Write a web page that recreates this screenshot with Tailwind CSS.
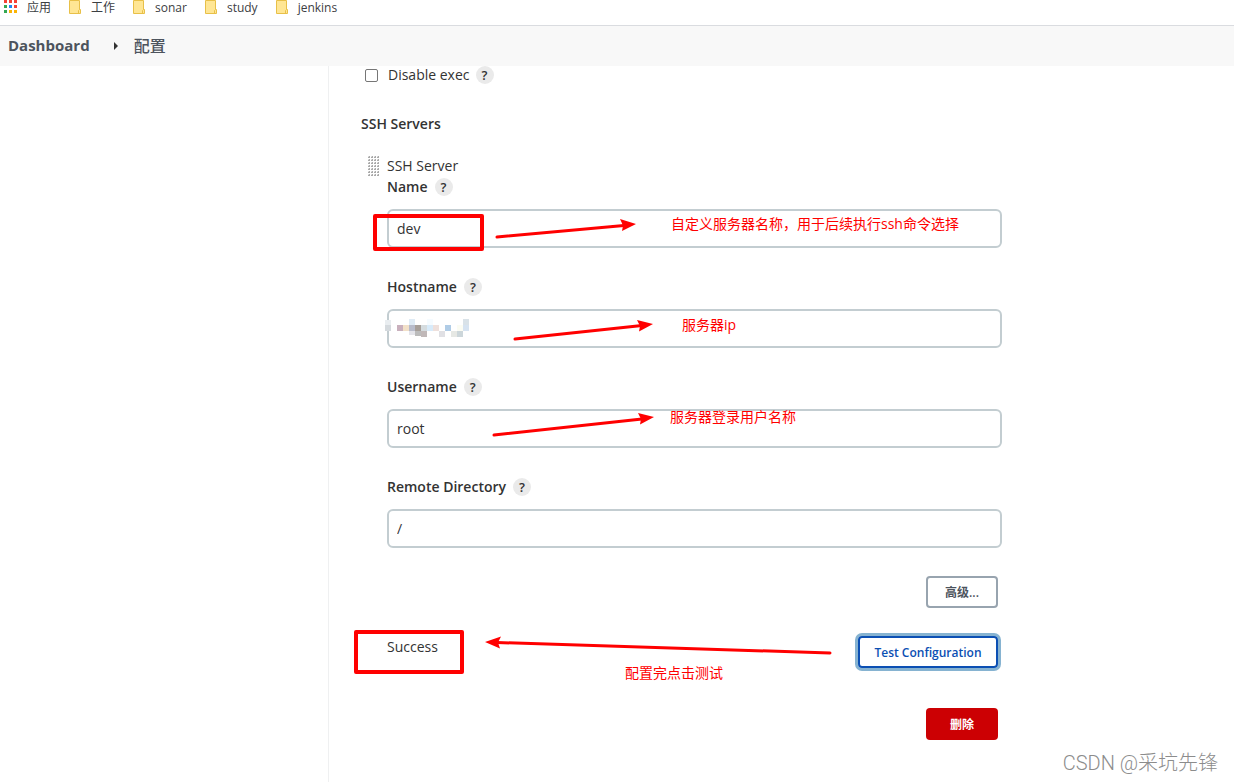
<!DOCTYPE html>
<html lang="zh-CN">
<head>
<meta charset="utf-8">
<meta name="viewport" content="width=device-width, initial-scale=1">
<title>配置 - Jenkins</title>
<script src="https://cdn.jsdelivr.net/npm/@tailwindcss/browser@4"></script>
</head>
<body class="relative flex min-h-screen flex-col overflow-x-hidden bg-white font-['Open_Sans','Noto_Sans_CJK_SC',sans-serif] text-sm text-[#333333]">

<!-- Bookmarks bar -->
<nav aria-label="书签" class="flex h-[26px] shrink-0 items-start gap-[18px] border-b border-[#dadce0] pl-1 text-xs leading-4 text-[#3c4043]">
  <a href="#" class="flex items-start gap-[10px]">
    <svg class="h-[14px] w-[13px]" viewBox="0 0 13 14" aria-hidden="true" shape-rendering="crispEdges">
      <path fill="#f44336" d="M0 0h3v3H0zM5 0h3v3H5zM10 0h3v3h-3z"/>
      <path fill="#34a853" d="M0 5h3v3H0zM0 10h3v3H0z"/>
      <path fill="#1e88f5" d="M5 5h3v3H5z"/>
      <path fill="#f44336" d="M10 5h3v3h-3z"/>
      <path fill="#fbb405" d="M5 10h3v3H5zM10 10h3v3h-3z"/>
    </svg>
    <span>应用</span>
  </a>
  <a href="#" class="flex items-start gap-[10px]">
    <svg class="h-[14px] w-3" viewBox="0 0 12 14" aria-hidden="true"><path fill="#ffe694" stroke="#e8c048" d="M.5.5h10v9h1v4H.5z"/><path fill="none" stroke="#e8c048" d="M9.5 13.5v-3l1-1"/></svg>
    <span>工作</span>
  </a>
  <a href="#" class="flex items-start gap-[10px]">
    <svg class="h-[14px] w-3" viewBox="0 0 12 14" aria-hidden="true"><path fill="#ffe694" stroke="#e8c048" d="M.5.5h10v9h1v4H.5z"/><path fill="none" stroke="#e8c048" d="M9.5 13.5v-3l1-1"/></svg>
    <span>sonar</span>
  </a>
  <a href="#" class="flex items-start gap-[10px]">
    <svg class="h-[14px] w-3" viewBox="0 0 12 14" aria-hidden="true"><path fill="#ffe694" stroke="#e8c048" d="M.5.5h10v9h1v4H.5z"/><path fill="none" stroke="#e8c048" d="M9.5 13.5v-3l1-1"/></svg>
    <span>study</span>
  </a>
  <a href="#" class="flex items-start gap-[10px]">
    <svg class="h-[14px] w-3" viewBox="0 0 12 14" aria-hidden="true"><path fill="#ffe694" stroke="#e8c048" d="M.5.5h10v9h1v4H.5z"/><path fill="none" stroke="#e8c048" d="M9.5 13.5v-3l1-1"/></svg>
    <span>jenkins</span>
  </a>
</nav>

<!-- Breadcrumbs -->
<nav aria-label="面包屑" class="flex h-10 shrink-0 items-center bg-[#f8f8f8] pl-2 text-[15px] text-[#4d545d]">
  <a href="#" class="font-bold">Dashboard</a>
  <svg class="mr-4 ml-6 h-2 w-1" viewBox="0 0 4 8" aria-hidden="true"><path fill="#333" d="M0 0l4 4-4 4z"/></svg>
  <a href="#" class="text-base font-medium">配置</a>
</nav>

<div class="flex flex-1">
  <aside class="w-[329px] shrink-0 border-r border-[#eff0f1]"></aside>

  <main class="relative min-w-0 flex-1 pl-8">
    <form class="flex max-w-[641px] flex-col">
      <div class="flex h-[18px] items-center pl-1">
        <input id="disable-exec" type="checkbox" class="size-[13px] appearance-none rounded-[2px] border border-[#767676] bg-white">
        <label for="disable-exec" class="ml-[10px]">Disable exec</label>
        <button type="button" aria-label="帮助" class="ml-[6px] flex size-[18px] items-center justify-center rounded-full bg-[#eaeaea] text-[13px] font-semibold">?</button>
      </div>

      <h2 class="mt-7 h-6 font-semibold leading-6">SSH Servers</h2>

      <div class="mt-5 flex">
        <svg class="ml-[7px] h-5 w-3 shrink-0" aria-hidden="true">
          <defs><pattern id="grip" width="3" height="3" patternUnits="userSpaceOnUse"><path fill="#dddddd" d="M0 0h2v2H0z"/><path fill="#aaaaaa" d="M1 0h1v2H0V1h1z"/></pattern></defs>
          <rect width="12" height="20" fill="url(#grip)"/>
        </svg>
        <div class="ml-[7px] flex min-w-0 flex-1 flex-col">
          <div class="h-[21px] leading-5">SSH Server</div>

          <div class="mb-[29px]">
            <div class="flex h-5 items-center gap-[7px]">
              <label for="name" class="font-semibold">Name</label>
              <button type="button" aria-label="帮助" class="flex size-[18px] items-center justify-center rounded-full bg-[#eaeaea] text-[13px] font-semibold">?</button>
            </div>
            <input id="name" type="text" value="dev" class="mt-3 block h-[39px] w-full rounded-md border-2 border-[#c3cdd1] bg-white px-2">
          </div>

          <div class="mb-[29px]">
            <div class="flex h-5 items-center gap-[7px]">
              <label for="hostname" class="font-semibold">Hostname</label>
              <button type="button" aria-label="帮助" class="flex size-[18px] items-center justify-center rounded-full bg-[#eaeaea] text-[13px] font-semibold">?</button>
            </div>
            <input id="hostname" type="text" class="mt-3 block h-[39px] w-full rounded-md border-2 border-[#c3cdd1] bg-white px-2">
          </div>

          <div class="mb-[29px]">
            <div class="flex h-5 items-center gap-[7px]">
              <label for="username" class="font-semibold">Username</label>
              <button type="button" aria-label="帮助" class="flex size-[18px] items-center justify-center rounded-full bg-[#eaeaea] text-[13px] font-semibold">?</button>
            </div>
            <input id="username" type="text" value="root" class="mt-3 block h-[39px] w-full rounded-md border-2 border-[#c3cdd1] bg-white px-2">
          </div>

          <div>
            <div class="flex h-5 items-center gap-[7px]">
              <label for="remote" class="font-semibold">Remote Directory</label>
              <button type="button" aria-label="帮助" class="flex size-[18px] items-center justify-center rounded-full bg-[#eaeaea] text-[13px] font-semibold">?</button>
            </div>
            <input id="remote" type="text" value="/" class="mt-3 block h-[39px] w-full rounded-md border-2 border-[#c3cdd1] bg-white px-2">
          </div>

          <div class="mt-7 flex flex-col items-end pr-1 text-xs font-semibold">
            <button type="button" class="h-8 w-[72px] rounded-[4px] border-2 border-[#98a4af] pt-px text-[#4d545d]">高级...</button>
            <div class="mt-7 flex w-full items-start justify-between">
              <output class="text-sm font-normal leading-[22px]">Success</output>
              <button type="button" class="h-8 w-[140px] rounded-[4px] border-2 border-[#0b4fb3] pt-px text-[#0b4fb3] ring-3 ring-[#86b3d1]">Test Configuration</button>
            </div>
            <button type="button" class="mt-10 h-8 w-[72px] rounded-[4px] bg-[#cc0003] pt-px font-bold text-white">删除</button>
          </div>
        </div>
      </div>
    </form>

    <!-- Annotation layer: blurred host value, red boxes, arrows and notes -->
    <svg class="pointer-events-none absolute top-0 left-0 h-[716px] w-[680px]" viewBox="329 66 680 716" aria-hidden="true">
      <g shape-rendering="crispEdges">
        <path fill="#e9edf0" d="M385 320h6v5h-6z"/><path fill="#d5dade" d="M385 325h6v6h-6z"/>
        <path fill="#dfebf5" d="M409 319h6v6h-6z"/><path fill="#f5fbff" d="M427 319h6v6h-6z"/><path fill="#d9e2e8" d="M463 319h6v6h-6z"/>
        <path fill="#c9b0bd" d="M397 325h6v6h-6z"/><path fill="#f2e0c8" d="M403 325h6v6h-6z"/><path fill="#b8bccb" d="M409 325h6v6h-6z"/>
        <path fill="#a79f99" d="M415 325h6v6h-6z"/><path fill="#d5dcdf" d="M421 325h6v6h-6z"/><path fill="#d8ebfa" d="M427 325h6v6h-6z"/>
        <path fill="#eee0dc" d="M433 325h6v6h-6z"/><path fill="#b0cce6" d="M445 325h6v6h-6z"/><path fill="#fbfcf3" d="M457 325h6v6h-6z"/><path fill="#d6e3f1" d="M463 325h6v6h-6z"/>
        <path fill="#e4e4ea" d="M409 331h6v4h-6z"/><path fill="#bbbbbb" d="M415 331h6v5h-6z"/><path fill="#c0b8b8" d="M421 331h6v6h-6z"/>
        <path fill="#e0e0e4" d="M439 331h6v6h-6z"/><path fill="#e6e8e4" d="M451 331h6v6h-6z"/><path fill="#ccd6da" d="M457 331h6v6h-6z"/>
      </g>
      <g fill="none" stroke="#ff0000" stroke-width="4" stroke-linejoin="round">
        <rect x="375" y="216" width="107" height="33"/>
        <rect x="356" y="632" width="106" height="40"/>
      </g>
      <g stroke="#ff0000" stroke-width="3" stroke-linecap="round">
        <path d="M497 237L624 225.500M515 339L642 325.500M494 435L642 419M830 653L497 642.500"/>
      </g>
      <g fill="#ff0000">
        <path d="M636 224L620 219L623 225.500L622 231Z"/>
        <path d="M653 324L637 320L640 326L639 331.500Z"/>
        <path d="M654 417L638 413L641 419L640 424.500Z"/>
        <path d="M485 642L501 636.500L498 642.500L500 648.500Z"/>
      </g>
    </svg>
    <p class="absolute top-[148px] left-[342px] leading-5 whitespace-nowrap text-[#ff0000]">自定义服务器名称，用于后续执行ssh命令选择</p>
    <p class="absolute top-[249px] left-[353px] leading-5 whitespace-nowrap text-[#ff0000]">服务器ip</p>
    <p class="absolute top-[341px] left-[341px] leading-5 whitespace-nowrap text-[#ff0000]">服务器登录用户名称</p>
    <p class="absolute top-[597px] left-[296px] leading-5 whitespace-nowrap text-[#ff0000]">配置完点击测试</p>
  </main>
</div>

<p class="absolute right-4 bottom-[5px] font-['Roboto','Noto_Sans_CJK_SC',sans-serif] text-xl leading-7 font-light text-[#8c8c8c]">CSDN @采坑先锋</p>
</body>
</html>
